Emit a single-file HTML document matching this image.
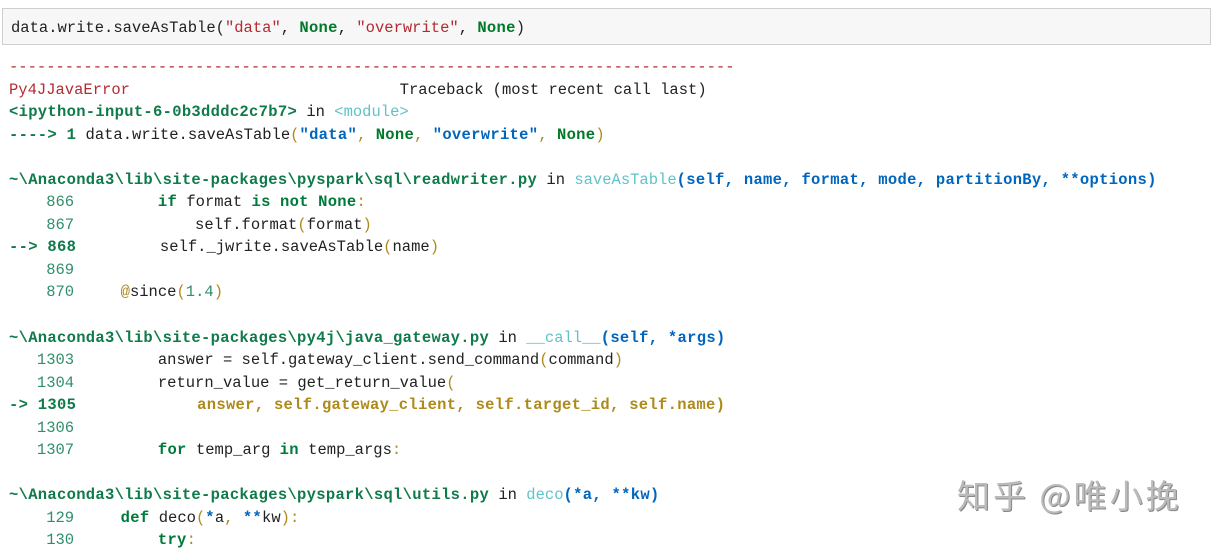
<!DOCTYPE html>
<html><head><meta charset="utf-8"><style>
body{margin:0;background:#fff;width:1213px;height:543px;overflow:hidden;position:relative;font-family:"Liberation Mono","Noto Sans CJK SC",monospace;font-size:15.5px;color:#222}
.in{position:absolute;left:2px;top:8px;width:1209px;height:37px;background:#f7f7f7;border:1px solid #cfcfcf;box-sizing:border-box}
.in div{position:absolute;left:8px;top:10px;white-space:pre}
.out{position:absolute;left:9px;top:56px;white-space:pre;line-height:22.55px}
.r{color:#b22b31}.g{color:#0f7a4a;font-weight:bold;letter-spacing:0.3px}.gn{color:#2f8f6a}.c{color:#5fc3c9}.b{color:#0065bd;font-weight:bold;letter-spacing:0.3px}.y{color:#ad8a1a}.k{color:#007a3c;font-weight:bold;letter-spacing:0.3px}.s{color:#b22b31}.n{color:#007a2a;font-weight:bold;letter-spacing:0.3px}
.wm{position:absolute;left:957px;top:472px;font-family:"Noto Sans CJK SC",sans-serif;font-size:33px;line-height:44px;color:#bbb;text-shadow:1px 1px 0 #888;letter-spacing:3px}
</style></head><body>
<div class="in"><div>data.write.saveAsTable(<span class="s">"data"</span>, <span class="n">None</span>, <span class="s">"overwrite"</span>, <span class="n">None</span>)</div></div>
<div class="out"><span class="r">------------------------------------------------------------------------------</span>
<span class="r">Py4JJavaError</span>                             Traceback (most recent call last)
<span class="g">&lt;ipython-input-6-0b3dddc2c7b7&gt;</span> in <span class="c">&lt;module&gt;</span>
<span class="g">----&gt; 1</span> data.write.saveAsTable<span class="y">(</span><span class="b">"data"</span><span class="y">,</span> <span class="n">None</span><span class="y">,</span> <span class="b">"overwrite"</span><span class="y">,</span> <span class="n">None</span><span class="y">)</span>

<span class="g">~\Anaconda3\lib\site-packages\pyspark\sql\readwriter.py</span> in <span class="c">saveAsTable</span><span class="b">(self, name, format, mode, partitionBy, **options)</span>
<span class="gn">    866</span>         <span class="k">if</span> format <span class="k">is</span> <span class="k">not</span> <span class="k">None</span><span class="y">:</span>
<span class="gn">    867</span>             self.format<span class="y">(</span>format<span class="y">)</span>
<span class="g">--&gt; 868</span>         self._jwrite.saveAsTable<span class="y">(</span>name<span class="y">)</span>
<span class="gn">    869</span> 
<span class="gn">    870</span>     <span class="y">@</span>since<span class="y">(</span><span class="gn">1.4</span><span class="y">)</span>

<span class="g">~\Anaconda3\lib\site-packages\py4j\java_gateway.py</span> in <span class="c">__call__</span><span class="b">(self, *args)</span>
<span class="gn">   1303</span>         answer = self.gateway_client.send_command<span class="y">(</span>command<span class="y">)</span>
<span class="gn">   1304</span>         return_value = get_return_value<span class="y">(</span>
<span class="g">-&gt; 1305</span>             <span class="y" style="font-weight:bold;letter-spacing:0.3px">answer, self.gateway_client, self.target_id, self.name)</span>
<span class="gn">   1306</span> 
<span class="gn">   1307</span>         <span class="k">for</span> temp_arg <span class="k">in</span> temp_args<span class="y">:</span>

<span class="g">~\Anaconda3\lib\site-packages\pyspark\sql\utils.py</span> in <span class="c">deco</span><span class="b">(*a, **kw)</span>
<span class="gn">    129</span>     <span class="k">def</span> deco<span class="y">(</span><span class="b">*</span>a<span class="y">,</span> <span class="b">**</span>kw<span class="y">):</span>
<span class="gn">    130</span>         <span class="k">try</span><span class="y">:</span></div>
<div class="wm">知乎 @唯小挽</div>
</body></html>
